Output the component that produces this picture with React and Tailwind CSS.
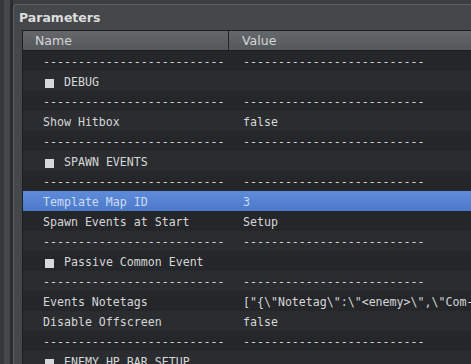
import React from 'react';

const DASH = '--------------------------';

const rows = [
  { type: 'dash' },
  { type: 'head', name: 'DEBUG' },
  { type: 'dash' },
  { name: 'Show Hitbox', value: 'false' },
  { type: 'dash' },
  { type: 'head', name: 'SPAWN EVENTS' },
  { type: 'dash' },
  { name: 'Template Map ID', value: '3', selected: true },
  { name: 'Spawn Events at Start', value: 'Setup' },
  { type: 'dash' },
  { type: 'head', name: 'Passive Common Event' },
  { type: 'dash' },
  { name: 'Events Notetags', value: '["{\\"Notetag\\":\\"<enemy>\\",\\"Com-' },
  { name: 'Disable Offscreen', value: 'false' },
  { type: 'dash' },
  { type: 'head', name: 'ENEMY HP BAR SETUP' },
];

function Row({ row, index }) {
  const bg = row.selected
    ? 'bg-gradient-to-b from-[#5f8cda] to-[#4b79c9] text-[#cfdcf3]'
    : index % 2 === 0
      ? 'bg-[#242629] text-[#d6d7d8]'
      : 'bg-[#2a2c2f] text-[#d6d7d8]';

  return (
    <div className={`flex h-5 shrink-0 items-center whitespace-nowrap pt-1 ${bg}`}>
      <div className="w-[207px] shrink-0 overflow-hidden pl-5">
        {row.type === 'dash' && DASH}
        {row.type === 'head' && (
          <div className="flex items-center">
            <span className="ml-[2px] mr-[10px] inline-block h-[9px] w-[9px] bg-[#d6d8dc]" />
            {row.name}
          </div>
        )}
        {!row.type && row.name}
      </div>
      <div className="min-w-0 flex-1 overflow-hidden pl-[13px]">
        {row.type === 'dash' ? DASH : row.value}
      </div>
    </div>
  );
}

export default function App() {
  return (
    <div className="flex h-[364px] w-[471px] overflow-hidden bg-[#3d4043]">
      <div className="w-1 shrink-0 bg-[#35373a]" />
      <div className="w-[6px] shrink-0 bg-[#45484b]" />
      <div className="w-[3px] shrink-0 bg-[#2b2d30]" />
      <div className="mt-1 flex min-w-0 flex-1 flex-col overflow-hidden rounded-tl-[4px] border-l border-t border-[#5c5f62] bg-[#45484b]">
        <div className="h-[25px] shrink-0 pl-[5px] pt-[5px] text-[12.5px] font-bold leading-[16px] text-[#dcdcdc] [font-family:'DejaVu_Sans',sans-serif]">
          Parameters
        </div>
        <div className="ml-2 flex shrink-0 flex-col border-l border-t border-[#1c1e20] bg-[#2a2c2f]">
          <div className="flex h-5 shrink-0 border-b border-[#1c1e20] bg-gradient-to-b from-[#65686b] to-[#55585b] text-[12.5px] leading-[19px] text-[#d4d5d6] [font-family:'DejaVu_Sans',sans-serif]">
            <div className="w-[206px] shrink-0 border-r border-[#222427] pl-3">Name</div>
            <div className="pl-[13px]">Value</div>
          </div>
          <div className="flex flex-col text-[11.6px] [font-family:'DejaVu_Sans_Mono',monospace]">
            {rows.map((row, i) => (
              <Row key={i} row={row} index={i} />
            ))}
          </div>
        </div>
      </div>
    </div>
  );
}
